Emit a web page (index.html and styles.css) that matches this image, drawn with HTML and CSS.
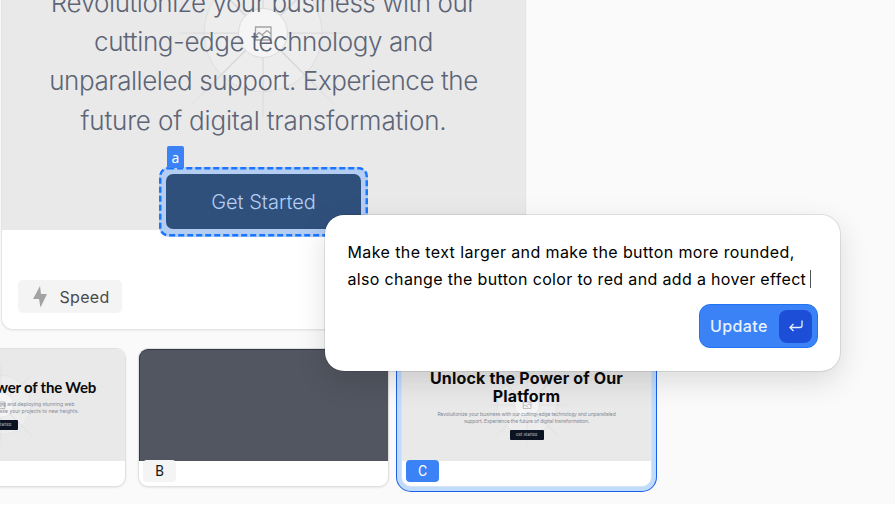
FILE: index.html
```
<!DOCTYPE html>
<html lang="en">
<head>
    <meta charset="UTF-8">
    <title>Design Editor</title>
    <link rel="stylesheet" href="styles.css">
</head>
<body>
    <svg width="0" height="0" class="defs">
        <defs>
            <radialGradient id="fade" gradientUnits="userSpaceOnUse" cx="100" cy="100" r="108">
                <stop offset="0" stop-color="#d2d2d2"/>
                <stop offset="0.6" stop-color="#d9d9d9"/>
                <stop offset="1" stop-color="#e9e9e9"/>
            </radialGradient>
        </defs>
        <symbol id="placeholder" viewBox="0 0 200 200">
            <circle cx="100" cy="100" r="59" fill="#ededed" stroke="#dfdfdf"/>
            <path d="M15 100.1H185M100.1 15V185" stroke="url(#fade)" fill="none"/>
            <path d="M22 22L178 178M22 178L178 22" stroke="url(#fade)" stroke-width="1.4" fill="none"/>
            <circle cx="100" cy="100" r="24.5" fill="#f5f5f5" stroke="#dcdcdc"/>
            <path d="M92.5 94H108V107H92.5ZM92.5 103L96 99.5L99 102L104 97.5L108 101M99 102L101.5 104.5" stroke="#a3a3a3" stroke-width="1.3" fill="none"/>
        </symbol>
    </svg>

    <main class="canvas">
        <section class="main-card">
            <div class="preview">
                <svg class="placeholder"><use href="#placeholder"/></svg>
                <p class="lead">
                    <span class="line line-1">Revolutionize your business with our</span>
                    <span class="line line-2">cutting-edge technology and</span>
                    <span class="line line-3">unparalleled support. Experience the</span>
                    <span class="line line-4">future of digital transformation.</span>
                </p>
                <div class="selection">
                    <svg class="dashes"><rect x="1.25" y="1.25" width="206.5" height="67" rx="8"/></svg>
                    <span class="tag">a</span>
                    <button class="get-started">Get Started</button>
                </div>
            </div>
            <div class="toolbar">
                <button class="speed">
                    <svg width="16" height="24" viewBox="0 0 16 24"><path d="M8 1L1 14H7L8.5 22.5L15 9H9Z" fill="#a3a3a3"/></svg>
                    <span>Speed</span>
                </button>
            </div>
        </section>

        <section class="versions">
            <article class="version">
                <div class="thumb thumb-a">
                    <svg class="thumb-art"><use href="#placeholder"/></svg>
                    <h3>Unlock the Power of the Web</h3>
                    <p>The ultimate platform for building and deploying stunning web<br>Join millions of developers and take your projects to new heights.</p>
                    <span class="mini-button">Get Started</span>
                </div>
            </article>
            <article class="version">
                <div class="thumb thumb-b"></div>
                <span class="label">B</span>
            </article>
            <article class="version selected">
                <div class="thumb thumb-c">
                    <svg class="thumb-art"><use href="#placeholder"/></svg>
                    <h3>Unlock the Power of Our<br>Platform</h3>
                    <p>Revolutionize your business with our cutting-edge technology and unparalleled<br>support. Experience the future of digital transformation.</p>
                    <span class="mini-button">Get Started</span>
                </div>
                <span class="label">C</span>
            </article>
        </section>

        <form class="prompt">
            <div class="prompt-text">
                <span class="prompt-line-1">Make the text larger and make the button more rounded,</span><br>
                <span class="prompt-line-2">also change the button color to red and add a hover effect</span><i class="caret"></i>
            </div>
            <button type="button" class="update">
                <span>Update</span>
                <span class="key">
                    <svg width="16" height="16" viewBox="0 0 16 16"><path d="M14 2.5V7.5Q14 9.5 12 9.5H2M5.5 6L2 9.5L5.5 13"/></svg>
                </span>
            </button>
        </form>
    </main>
</body>
</html>
```
FILE: styles.css
```
* {
    box-sizing: border-box;
}

body {
    margin: 0;
    height: 511px;
    overflow: hidden;
    background: #fff;
    font-family: Inter, "Liberation Sans", sans-serif;
}

p, h3 {
    margin: 0;
}

button {
    border: none;
    padding: 0;
    font-family: inherit;
}

.defs {
    position: absolute;
}

.canvas {
    position: relative;
    height: 504px;
    overflow: hidden;
    background: #fafafa;
}

/* Main preview */
.main-card {
    width: 525px;
    height: 330px;
    margin-left: 1px;
    overflow: hidden;
    background: #fff;
    border: 1px solid #e5e5e5;
    border-top: none;
    border-radius: 0 0 12px 12px;
    box-shadow: 0 1px 2px rgba(0, 0, 0, 0.06);
}

.preview {
    position: relative;
    display: flex;
    flex-direction: column;
    align-items: center;
    height: 230px;
    background: #e9e9e9;
}

.placeholder {
    position: absolute;
    left: 161px;
    top: -67px;
    width: 200px;
    height: 200px;
}

.lead {
    position: relative;
    height: 167px;
    padding-top: 3px;
    margin-top: -20px;
    flex: none;
    color: #5d6577;
    font-size: 26px;
    font-weight: 300;
    line-height: 39.2px;
    text-align: center;
    white-space: nowrap;
}

.line {
    display: table;
    margin: 0 auto;
}

.line-1 {
    letter-spacing: -0.47px;
}

.line-2 {
    letter-spacing: -0.4px;
}

.line-3 {
    letter-spacing: -0.44px;
}

.line-4 {
    letter-spacing: -0.17px;
}

.selection {
    position: relative;
    z-index: 1;
    flex: none;
    width: 209px;
    height: 70px;
    margin-top: 20px;
    padding: 7px;
    background: #b3cdf3;
    border-radius: 10px;
}

.dashes {
    position: absolute;
    left: 0;
    top: 0;
    width: 209px;
    height: 70px;
    fill: none;
    stroke: #1a75ff;
    stroke-width: 2.5;
    stroke-dasharray: 6 3;
}

.tag {
    position: absolute;
    left: 8px;
    top: -21px;
    width: 17px;
    height: 22px;
    background: #3b82f6;
    border-radius: 2px 2px 0 0;
    color: #fff;
    font: 14px/24px "Noto Sans", sans-serif;
    text-align: center;
}

.get-started {
    width: 195px;
    height: 55px;
    background: #30507c;
    border-radius: 7px;
    color: #b3cdf3;
    font-size: 20px;
    font-weight: 300;
}

.toolbar {
    padding: 50px 15.5px;
}

.speed {
    display: flex;
    align-items: center;
    gap: 12px;
    width: 104px;
    height: 33px;
    padding-left: 14px;
    background: #f4f4f4;
    border-radius: 5px;
    color: #4a4a4a;
    font-size: 16px;
    letter-spacing: 0.3px;
}

/* Version thumbnails */
.versions {
    display: flex;
    gap: 12px;
    margin: 18px 0 0 -125px;
}

.version {
    position: relative;
    flex: none;
    width: 251px;
    height: 139px;
    background: #fff;
    border: 1px solid #e0e0e0;
    border-radius: 10px;
    box-shadow: 0 1px 2px rgba(0, 0, 0, 0.08);
}

.version.selected {
    border-color: #d8e3f0;
    box-shadow: 0 0 0 4px #bfdbfe, 0 0 0 5px #1d5fe8;
}

.thumb {
    position: relative;
    height: 112px;
    overflow: hidden;
    background: #e9e9e9;
    border-radius: 9px 9px 0 0;
    text-align: center;
    white-space: nowrap;
}

.thumb-b {
    background: #525660;
    border: 1px solid #333a4a;
    border-width: 1px 0 0 1px;
}

.thumb-art {
    position: absolute;
    left: 75px;
    top: 6px;
    width: 100px;
    height: 100px;
}

.thumb h3 {
    position: relative;
    color: #0a0a0a;
    font-size: 16px;
    font-weight: 700;
    line-height: 17px;
}

.thumb-a h3 {
    padding-top: 30px;
    font-family: Lato, sans-serif;
    font-size: 15px;
    letter-spacing: -0.2px;
}

.thumb-a p {
    letter-spacing: 0.03px;
}

.thumb-c h3 {
    padding-top: 21px;
    line-height: 17.5px;
    letter-spacing: 0.16px;
}

.thumb p {
    position: relative;
    margin-top: 5px;
    color: #858995;
    font-size: 5px;
    line-height: 7px;
}

.thumb-c p {
    margin-top: 6px;
    letter-spacing: -0.11px;
}

.mini-button {
    position: relative;
    display: block;
    width: 34px;
    height: 10px;
    margin: 5px auto 0;
    background: #0b1222;
    border-radius: 1px;
    color: #c6cad2;
    font-size: 4px;
    line-height: 10px;
}

.label {
    position: absolute;
    left: 4px;
    bottom: 4px;
    width: 33px;
    height: 22px;
    background: #f4f4f4;
    border-radius: 4px;
    color: #171717;
    font: 14px/22px Roboto, sans-serif;
    text-align: center;
}

.selected .label {
    background: #3b82f6;
    color: #fff;
}

/* Prompt popup */
.prompt {
    position: absolute;
    z-index: 2;
    left: 325px;
    top: 215px;
    display: flex;
    flex-direction: column;
    align-items: flex-end;
    width: 515px;
    height: 156px;
    padding: 24px 22px 0;
    background: #fff;
    border-radius: 19px;
    box-shadow: 0 0 0 1px rgba(0, 0, 0, 0.09), 0 10px 30px rgba(0, 0, 0, 0.13);
}

.prompt-text {
    width: 470.5px;
    height: 65px;
    color: #000;
    font-size: 16px;
    line-height: 27px;
    white-space: nowrap;
}

.prompt-line-1 {
    letter-spacing: 0.4px;
}

.prompt-line-2 {
    letter-spacing: 0.34px;
}

.caret {
    display: inline-block;
    width: 1px;
    height: 18px;
    margin-left: 4px;
    background: #555;
    vertical-align: -3px;
}

.update {
    display: flex;
    align-items: center;
    justify-content: space-between;
    width: 119px;
    height: 44px;
    padding: 0 5px 0 10px;
    background: #3b82f6;
    border: 1px solid #1f74f5;
    border-radius: 11px;
    color: #e8f1ff;
    font-size: 16px;
    font-weight: 500;
    letter-spacing: 0.4px;
}

.key {
    display: flex;
    align-items: center;
    justify-content: center;
    width: 33px;
    height: 33px;
    background: #1d4ed8;
    border-radius: 8px;
}

.key path {
    fill: none;
    stroke: #e8f1ff;
    stroke-width: 1.3;
}
```
